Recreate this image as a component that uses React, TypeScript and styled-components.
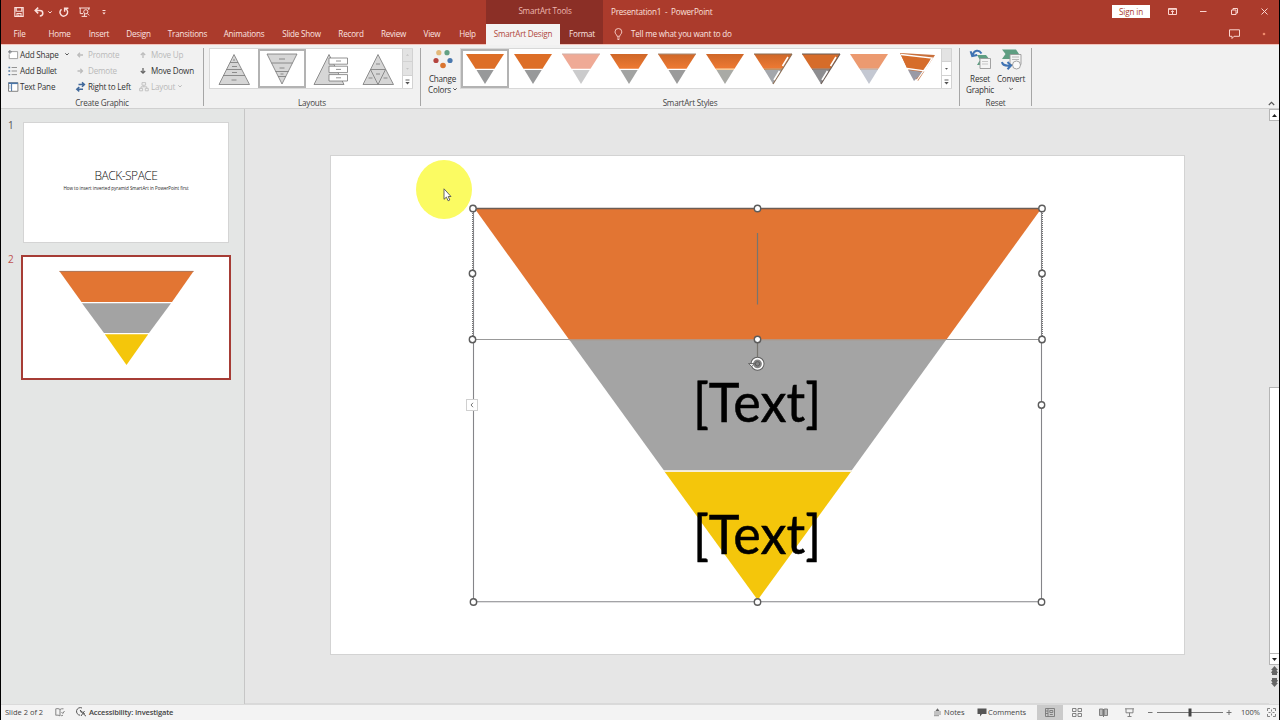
import React from "react";
import styled, { createGlobalStyle, css } from "styled-components";

const Global = createGlobalStyle`
  * { box-sizing: border-box; }
  body { margin: 0; background: #000; }
  svg { display: block; flex: none; overflow: visible; }
`;

const ui = `"Open Sans", "Noto Sans", sans-serif`;

const Window = styled.div`
  width: 1280px; height: 720px; padding: 0 1px; background: #000;
  display: flex; flex-direction: column; overflow: hidden;
  font-family: ${ui}; font-size: 8.1px; letter-spacing: -0.21px; color: #333; line-height: 12px;
  white-space: nowrap;
`;

/* ---------- title bar ---------- */
const Header = styled.header`
  height: 45px; flex: none; background: #ab3b2c; color: #fbe4e0; display: flex; flex-direction: column;
  border-bottom: 1px solid #f3c3bb;
`;
const TitleBar = styled.div`height: 24px; display: flex; align-items: stretch;`;
const QuickAccess = styled.div`
  width: 485px; display: flex; align-items: center; padding-left: 13px;
`;
const Slot = styled.span<{ $w: number }>`
  width: ${(p) => p.$w}px; flex: none; display: flex; align-items: center; justify-content: flex-start;
`;
const ContextTitle = styled.div`
  width: 117px; background: #8b2f26; color: #eeb9b1; display: flex; justify-content: center; align-items: center;
  padding: 0 0 2px 1px;
`;
const DocTitle = styled.div`
  flex: 1; padding: 0 0 0 8px; display: flex; align-items: center; white-space: pre; color: #fbe0dc;
`;
const SignIn = styled.button`
  width: 38px; height: 13px; margin: 5px 18px 0 0; padding: 0; border: 0; background: #fff; color: #ab3b2c;
  font: 8.1px/13px ${ui}; letter-spacing: -0.12px;
`;
const WinButtons = styled.div`display: flex; align-items: center; width: 111px; padding-bottom: 2px;`;

const TabRow = styled.nav`height: 20px; display: flex; align-items: stretch;`;
const Tab = styled.div<{ $w: number; $kind?: "active" | "context" }>`
  width: ${(p) => p.$w}px; flex: none; display: flex; align-items: center; justify-content: center;
  ${(p) => p.$kind === "active" && css`background: #f4f3f3; color: #b0483c; height: 21px; padding-bottom: 1px;`}
  ${(p) => p.$kind === "context" && css`background: #8b2f26; padding-left: 1px;`}
`;
const TellMe = styled.div`flex: 1; display: flex; align-items: center; padding-left: 11px; gap: 8px;`;

/* ---------- ribbon ---------- */
const Ribbon = styled.section`
  height: 64px; flex: none; background: #f1f1f1; display: flex; border-bottom: 1px solid #d0d0d0; padding-top: 3px;
`;
const Group = styled.div<{ $w: number }>`
  width: ${(p) => p.$w}px; height: 58px; flex: none; display: flex; flex-direction: column; border-right: 1px solid #a6a6a6;
`;
const GroupBody = styled.div<{ $pad?: number }>`
  height: 49px; flex: none; display: flex; align-items: flex-start; padding-left: ${(p) => p.$pad ?? 0}px;
`;
const GroupLabel = styled.div`
  text-align: center; line-height: 11px; color: #444;
`;
const CmdColumn = styled.div<{ $w: number }>`width: ${(p) => p.$w}px; display: flex; flex-direction: column;`;
const Cmd = styled.div<{ $off?: boolean }>`
  height: 16px; display: flex; align-items: center; padding-bottom: 3px; color: ${(p) => (p.$off ? "#b9b9b9" : "#333")};
  > svg:first-child { margin-right: 1px; }
`;
const Chevron = styled.span<{ $gap?: number }>`margin-left: ${(p) => p.$gap ?? 4}px; display: flex;`;
const Gallery = styled.div`
  height: 41px; display: flex; background: #fff; border: 1px solid #d8d8d8; border-right: 0;
`;
const GalleryItem = styled.div<{ $on?: boolean }>`
  width: 48px; height: 39px; flex: none; display: flex; align-items: center; justify-content: center;
  box-shadow: ${(p) => (p.$on ? "inset 0 0 0 2px #b3b3b3" : "none")};
`;
const Scroller = styled.div`
  width: 11px; display: flex; flex-direction: column; border-left: 1px solid #d2d2d2; border-right: 1px solid #d2d2d2;
`;
const ScrollStep = styled.div<{ $off?: boolean }>`
  flex: 1; display: flex; align-items: center; justify-content: center; border-bottom: 1px solid #d2d2d2;
  background: ${(p) => (p.$off ? "#e3e3e3" : "#fff")};
  &:last-child { border-bottom: 0; }
`;
const BigCmd = styled.div<{ $w: number }>`
  width: ${(p) => p.$w}px; display: flex; flex-direction: column; align-items: center; line-height: 11px; padding-left: 1px;
`;
const BigIcon = styled.div`height: 25px; display: flex; align-items: flex-start; padding-top: 1px;`;
const Inline = styled.span`display: flex; align-items: center;`;
const RibbonEnd = styled.div`flex: 1; display: flex; align-items: flex-end; justify-content: flex-end; padding: 0 4px 2px 0;`;

/* ---------- work area ---------- */
const Work = styled.main`flex: 1; display: flex; min-height: 0; background: #e6e6e6;`;
const Thumbs = styled.aside`
  width: 244px; flex: none; background: #e4e6e5; border-right: 1px solid #c6c6c6;
  padding: 13px 0 0 7px; display: flex; flex-direction: column; gap: 12px;
`;
const ThumbRow = styled.div`display: flex; align-items: flex-start;`;
const ThumbNo = styled.span<{ $on?: boolean }>`
  width: 13px; font-size: 10px; line-height: ${(p) => (p.$on ? 9 : 7)}px; color: ${(p) => (p.$on ? "#c0504d" : "#555")};
`;
const Thumb = styled.div<{ $on?: boolean }>`
  background: #fff; display: flex; flex-direction: column; align-items: center;
  ${(p) => p.$on
    ? css`width: 210px; height: 125px; border: 2px solid #a63c35; padding: 14px 0 0 0;`
    : css`width: 206px; height: 121px; border: 1px solid #d4d4d4; margin-left: 2px; padding-top: 45px;`}
`;
const ThumbTitle = styled.div`font-size: 12px; font-weight: 300; line-height: 16px; color: #111; letter-spacing: -0.5px;`;
const ThumbSub = styled.div`font-size: 4.5px; line-height: 9px; color: #222; letter-spacing: 0;`;

const Stage = styled.div`flex: 1; padding: 46px 0 0 85px; border-bottom: 1px solid #d9d9d9;`;
const Slide = styled.div`
  position: relative; width: 855px; height: 500px; background: #fff; border: 1px solid #d3d3d3;
`;
const Art = styled.svg`position: absolute; left: -331px; top: -156px;`;
const Placeholder = styled.div<{ $y: number }>`
  position: absolute; left: 326px; width: 200px; top: ${(p) => p.$y}px; text-align: center;
  font-family: Lato, "Open Sans", sans-serif; font-size: 53.5px; line-height: 72px; color: #000; letter-spacing: 0;
  transform: scaleX(0.975); -webkit-text-stroke: 0.5px #000;
`;
const PaneToggle = styled.div`
  position: absolute; left: 135px; top: 243px; width: 12px; height: 12px; background: #fff; border: 1px solid #d0d0d0;
  display: flex; align-items: center; justify-content: center;
`;
const Halo = styled.div`
  position: absolute; left: 85px; top: 4px; width: 56px; height: 59px; border-radius: 50%; background: #fbfb62;
  filter: blur(0.6px);
`;
const Pointer = styled.svg`position: absolute; left: 112px; top: 32px;`;

const VScroll = styled.div`width: 10px; flex: none; display: flex; flex-direction: column; align-items: stretch;`;
const VButton = styled.div`
  height: 12px; flex: none; background: #fff; border: 1px solid #b5b5b5; border-right: 0; display: flex; align-items: center; justify-content: center;
`;
const VTrack = styled.div`height: 266px; flex: none;`;
const VThumb = styled.div`height: 266px; flex: none; background: #fff; border: 1px solid #b5b5b5; border-right: 0; border-bottom: 0;`;
const VNav = styled.div`display: flex; flex-direction: column; align-items: center; gap: 3px; padding-top: 1px;`;

/* ---------- status bar ---------- */
const Status = styled.footer`
  height: 16px; flex: none; background: #f3f3f3; display: flex; align-items: center; color: #444; border-top: 1px solid #dadada;
  padding-bottom: 1px;
`;
const StatusText = styled.span<{ $w?: number; $bold?: boolean }>`
  ${(p) => p.$w && `width: ${p.$w}px;`}
  font-size: 7.5px; letter-spacing: ${(p) => (p.$bold ? -0.14 : 0)}px; font-weight: ${(p) => (p.$bold ? 600 : 400)};
`;
const Spacer = styled.span`flex: 1;`;
const ViewButton = styled.span<{ $on?: boolean; $w: number }>`
  width: ${(p) => p.$w}px; height: 15px; display: flex; align-items: center; justify-content: center;
  background: ${(p) => (p.$on ? "#cacaca" : "transparent")};
`;

/* ---------- icons ---------- */
const Caret = ({ c = "#555", s = 4 }: { c?: string; s?: number }) => (
  <svg width={s} height={s / 2 + 0.5} viewBox="0 0 4 2.5"><path d="M.3.3 2 2 3.7.3" fill="none" stroke={c} strokeWidth="1" /></svg>
);
const Tri = ({ up, c = "#333", w = 4 }: { up?: boolean; c?: string; w?: number }) => (
  <svg width={w} height={w * 0.6} viewBox="0 0 5 3"><path d={up ? "M0 3h5L2.5 0z" : "M0 0h5L2.5 3z"} fill={c} /></svg>
);
const MoreTri = () => (
  <svg width="5" height="6"><path d="M.5 1h4" stroke="#555" strokeWidth=".9" /><path d="M.3 3h4.4L2.5 5.6z" fill="#555" /></svg>
);
const SaveIcon = () => (
  <svg width="10" height="10" fill="none" stroke="#fbe0dc"><path d="M.8.6h8.4v8.8H.8zM2.2 .6v3.6h5.6V.6M3 9.3V6.5h4v2.8M4.8 7.5v1.8" strokeWidth="1.1" /></svg>
);
const UndoIcon = () => (
  <svg width="10" height="10" fill="none" stroke="#fbe0dc" strokeWidth="1.5"><path d="M4.2.6 1.2 3.5l3 2.9M1.4 3.5h4.4c4 0 4 5.3 0 5.6" /></svg>
);
const RedoIcon = () => (
  <svg width="10" height="10" fill="none" stroke="#fbe0dc" strokeWidth="1.4"><path d="M2.5 2.3C-1.3 6 3.2 11 7 8.3 9.7 6 8.9 3 6.3 1.7M5.6 4.8V1.2h3.8" /></svg>
);
const ShowIcon = () => (
  <svg width="11" height="10" fill="none" stroke="#fbe0dc" strokeWidth="1"><path d="M0 1h11M1.2 1v5.6H4M9.8 1v2M5.4 6.6v2.5M2.6 9.4h5.5" /><circle cx="6.8" cy="4.8" r="2.1" /><path d="M8.2 6.4l2 2" /></svg>
);
const ArrowIcon = ({ d, c }: { d: string; c: string }) => (
  <svg width="11" height="8" fill="none" stroke={c} strokeWidth="1.3"><path d={d} /></svg>
);
const LEFT = "M7 4H2M4 1.8 1.8 4 4 6.2";
const RIGHT = "M1.5 4H6.5M4.3 1.8 6.5 4 4.3 6.2";
const UP = "M4 7V2M1.8 4 4 1.8 6.2 4";
const DOWN = "M4 1v5M1.8 4 4 6.2 6.2 4";

const AddShapeIcon = () => (
  <svg width="11" height="10"><path d="M3 1.6h6.6v7H1.2V4.3" fill="#fff" stroke="#999" strokeWidth=".9" /><path d="M1.9 0v3.8M0 1.9h3.8" stroke="#70757a" strokeWidth="1" /></svg>
);
const BulletIcon = () => (
  <svg width="11" height="10"><path d="M3.6 1.5H9M3.6 5H9M3.6 8.6H9" stroke="#888" strokeWidth=".9" /><path d="M.4 1.5h1.8M.4 5h1.8M.4 8.6h1.8" stroke="#51779e" strokeWidth="1.4" /></svg>
);
const PaneIcon = () => (
  <svg width="11" height="10"><path d="M.5.7h9.4v8.6H.5z" fill="#fff" stroke="#777" strokeWidth=".9" /><path d="M.5 1.3h9.4" stroke="#4a76a8" strokeWidth="1.6" /><path d="M3.6 1v8" stroke="#4a76a8" strokeWidth="1" /><path d="M1.3 4h1.2M1.3 6h1.2" stroke="#4a76a8" strokeWidth=".8" /></svg>
);
const SwapIcon = () => (
  <svg width="11" height="10" fill="none" stroke="#41699b" strokeWidth="1.5"><path d="M2.5 2.6h6M6 .4l2.4 2.2L6 4.8M7 7.2H1M3.3 5 .8 7.2l2.5 2.2" /></svg>
);
const TreeIcon = () => (
  <svg width="11" height="10" fill="none" stroke="#c0c0c0" strokeWidth=".9"><path d="M3 .6h3.6v2.6H3zM.6 6.4h3v2.4h-3zM6.3 6.4h3v2.4h-3zM4.8 3.2v1.6M2 6.4V4.8h5.8v1.6" /></svg>
);

const LayoutArt = ({ kind }: { kind: number }) => (
  <svg width="36" height="32" fill="#d6d6d6" stroke="#777" strokeWidth=".8">
    {kind === 0 && (<><path d="M18 1.5 33.5 31.5H3z" /><path d="M14 9.5h8M10.5 16.5h15M7 22.5h22M17 7h2M16 13.5h5M16 19.5h5M15.5 27h5" /></>)}
    {kind === 1 && (<><path d="M3 1h30L18 31z" /><path d="M7.5 10h21M11.5 18.5h13M14 23.5h8M15 6h6M15.5 15h5M16.5 21h3" /></>)}
    {kind === 2 && (<><path d="M17 1.5 32 31.5H2z" /><path d="M17 5h18.500v6.200H17zM17 13.200h18.500v6.400H17zM17 21.600h18.500v6.400H17z" fill="#fff" /><path d="M24 8h5M24 16.400h5M24 24.800h5" /></>)}
    {kind === 3 && (<><path d="M18 1.500 33.500 31.500H3z" /><path d="M10.500 16.500h15L18 31.500zM16 11h4M8.500 25h4M16 21h4M23.500 25h4" /></>)}
  </svg>
);

type StyleSpec = { top: string; bottom: string; line?: string; shine?: boolean; tilt?: boolean; edge?: string };
const artStyles: StyleSpec[] = [
  { top: "#dd6e27", bottom: "#98999a" },
  { top: "#dd6e27", bottom: "#98999a" },
  { top: "#efaa96", bottom: "#cbcbcc", edge: "#d0b0a8" },
  { top: "url(#warm)", bottom: "#a2a3a2" },
  { top: "url(#warm)", bottom: "#9b9b9b", edge: "#a58b78" },
  { top: "url(#warm)", bottom: "#a9aaa5", line: "#f4c187" },
  { top: "url(#warm)", bottom: "#a4a7ac", edge: "#8b6e55", line: "#b08050", shine: true },
  { top: "#d66c2a", bottom: "#8d8d90", edge: "#6b5c55", line: "#7c6a60", shine: true },
  { top: "#ec9a70", bottom: "#c4c8d2", line: "#b9a7a0" },
  { top: "#d66c2a", bottom: "#9a9aa6", tilt: true },
];
const StyleArt = ({ s }: { s: StyleSpec }) => (
  <svg width="38" height="32">
    {s.tilt ? (
      <>
        <path d="M2 0 37 2 20 28 9 15z" fill="#c9703c" />
        <path d="M3 2 33 5 26 17 9 15z" fill={s.top} />
        <path d="M10 17 25 19 16 28z" fill={s.bottom} />
        <path d="M3 1.500 34 5 26.500 17.800 9 15.500M34.500 5 18 28.500" fill="none" stroke="#fff" strokeWidth="1.300" />
      </>
    ) : (
      <>
        <path d="M0 1h38L28.500 15.800H9.500z" fill={s.top} />
        <path d="M10.500 17H27.700L19 31z" fill={s.bottom} />
        {s.line && <path d="M10 16.200h18" stroke={s.line} strokeWidth="1.300" />}
        {s.edge && <path d="M0 1h38" stroke={s.edge} strokeWidth="1.200" />}
        {s.shine && <path d="M38 1 19 31" stroke={s.edge} strokeWidth="1.200" />}
        {s.shine && <path d="M34 4 28.500 13M25.500 18 20 27" stroke="#fff" strokeWidth="1.600" />}
      </>
    )}
  </svg>
);

const DotsIcon = () => (
  <svg width="20" height="20">
    <circle cx="5.8" cy="3.7" r="2.6" fill="#e3b878" /><circle cx="14" cy="3.7" r="2.6" fill="#62a084" />
    <circle cx="3" cy="11.5" r="2.6" fill="#b5453f" /><circle cx="17" cy="11.5" r="2.6" fill="#4a78ae" />
    <circle cx="10" cy="16.5" r="2.8" fill="#d9742f" />
  </svg>
);
const ResetIcon = () => (
  <svg width="21" height="21">
    <path d="M7 6h9l4 5-4 5H7l3-5z" fill="#5f9e82" />
    <path d="M10 9.5h10.5v10H10z" fill="#f4f4f4" stroke="#999" strokeWidth=".9" /><path d="M12 12.5h6M12 15h6" stroke="#bbb" strokeWidth=".8" />
    <path d="M11.5 4.5C9 .6 4.2.8 2.6 6M.6 2.2 2.2 7l5-1" fill="none" stroke="#3f73b3" strokeWidth="2" />
  </svg>
);
const ConvertIcon = () => (
  <svg width="21" height="21">
    <path d="M1 .5h14l3 4.5-3 5H1l3.5-5z" fill="#5f9e82" />
    <path d="M9 5.5h11v10H9z" fill="#f4f4f4" stroke="#999" strokeWidth=".9" /><path d="M11 8h7M11 10.5h7" stroke="#aaa" strokeWidth=".8" />
    <circle cx="15.5" cy="16" r="4" fill="#fafafa" stroke="#999" strokeWidth=".9" />
    <path d="M1 13c.5 3.500 4 4 8.500 3.500M6.500 13l3.500 3.500-3.500 3.700" fill="none" stroke="#3f73b3" strokeWidth="2" />
  </svg>
);

const tabs: [string, number][] = [
  ["File", 37], ["Home", 43], ["Insert", 36], ["Design", 43], ["Transitions", 55], ["Animations", 58],
  ["Slide Show", 57], ["Record", 42], ["Review", 43], ["View", 34], ["Help", 37],
];

const handles: [number, number][] = [
  [473, 208.5], [757.5, 208.5], [1042, 208.5], [472.5, 273.5], [1042, 273.5],
  [472.5, 339.5], [757.5, 339.5], [1042, 339.5], [1041.5, 405], [473.5, 602], [757.5, 602], [1041.5, 602],
];

export default function App() {
  return (
    <Window>
      <Global />
      <Header>
        <TitleBar>
          <QuickAccess>
            <Slot $w={20}><SaveIcon /></Slot>
            <Slot $w={14}><UndoIcon /></Slot>
            <Slot $w={11}><Caret c="#fbe0dc" /></Slot>
            <Slot $w={20}><RedoIcon /></Slot>
            <Slot $w={23}><ShowIcon /></Slot>
            <svg width="4" height="6"><path d="M.5 1.5h3" stroke="#fbe0dc" /><path d="M.3 3.5h3.4L2 5.5z" fill="#fbe0dc" /></svg>
          </QuickAccess>
          <ContextTitle>SmartArt Tools</ContextTitle>
          <DocTitle>{"Presentation1  -  PowerPoint"}</DocTitle>
          <SignIn>Sign in</SignIn>
          <WinButtons>
            <Slot $w={32}><svg width="9" height="7" fill="none" stroke="#fbd5cf"><path d="M.5.5h8v6h-8zM.5 1.3h8M4.5 6V2.8M3 4l1.5-1.3L6 4" /></svg></Slot>
            <Slot $w={31}><svg width="7" height="7"><path d="M0 3.5h6.5" stroke="#fbd5cf" /></svg></Slot>
            <Slot $w={30}><svg width="7" height="7" fill="none" stroke="#fbd5cf"><path d="M.5 2h4.5v4.5H.5zM2 2V.5h4.5V5H5" /></svg></Slot>
            <Slot $w={10}><svg width="7" height="7"><path d="M.5.5l6 6M6.5.5l-6 6" stroke="#fbd5cf" /></svg></Slot>
          </WinButtons>
        </TitleBar>
        <TabRow>
          {tabs.map(([t, w]) => <Tab key={t} $w={w}>{t}</Tab>)}
          <Tab $w={74} $kind="active">SmartArt Design</Tab>
          <Tab $w={43} $kind="context">Format</Tab>
          <TellMe>
            <svg width="9" height="12" fill="none" stroke="#fbd5cf" strokeWidth=".9"><path d="M3 8.3C3 6.5 1 6 1 3.9a3.4 3.4 0 0 1 6.8 0C7.8 6 5.8 6.5 5.8 8.3zM3 10h2.8M3.5 11.5h1.8" /></svg>
            Tell me what you want to do
          </TellMe>
          <Slot $w={31}><svg width="11" height="10" fill="none" stroke="#fbd5cf"><path d="M.5.8h10v6.5H5L3 9.5V7.3H.5z" /></svg></Slot>
          <Slot $w={19}><svg width="8" height="4"><circle cx="4" cy="2" r="1.3" fill="#ef8a6b" /></svg></Slot>
        </TabRow>
      </Header>

      <Ribbon>
        <Group $w={203}>
          <GroupBody $pad={7}>
            <CmdColumn $w={68}>
              <Cmd><AddShapeIcon />Add Shape<Chevron $gap={6}><Caret /></Chevron></Cmd>
              <Cmd><BulletIcon />Add Bullet</Cmd>
              <Cmd><PaneIcon />Text Pane</Cmd>
            </CmdColumn>
            <CmdColumn $w={63}>
              <Cmd $off><ArrowIcon d={LEFT} c="#bcbcbc" />Promote</Cmd>
              <Cmd $off><ArrowIcon d={RIGHT} c="#bcbcbc" />Demote</Cmd>
              <Cmd><SwapIcon />Right to Left</Cmd>
            </CmdColumn>
            <CmdColumn $w={60}>
              <Cmd $off><ArrowIcon d={UP} c="#bcbcbc" />Move Up</Cmd>
              <Cmd><ArrowIcon d={DOWN} c="#666" />Move Down</Cmd>
              <Cmd $off><TreeIcon />Layout<Chevron $gap={3}><Caret c="#bbb" /></Chevron></Cmd>
            </CmdColumn>
          </GroupBody>
          <GroupLabel>Create Graphic</GroupLabel>
        </Group>

        <Group $w={217}>
          <GroupBody $pad={5}>
            <Gallery>
              {[0, 1, 2, 3].map((k) => <GalleryItem key={k} $on={k === 1}><LayoutArt kind={k} /></GalleryItem>)}
              <Scroller>
                <ScrollStep $off><Tri up c="#c4c4c4" w={3} /></ScrollStep>
                <ScrollStep $off><Tri c="#c4c4c4" w={3} /></ScrollStep>
                <ScrollStep><MoreTri /></ScrollStep>
              </Scroller>
            </Gallery>
          </GroupBody>
          <GroupLabel>Layouts</GroupLabel>
        </Group>

        <Group $w={539}>
          <GroupBody $pad={3}>
            <BigCmd $w={36}>
              <BigIcon><DotsIcon /></BigIcon>
              <span>Change</span>
              <Inline>Colors<Chevron $gap={2}><Caret /></Chevron></Inline>
            </BigCmd>
            <Gallery>
              <svg width="0" height="0">
                <defs>
                  <linearGradient id="warm" x1="0" y1="0" x2="0" y2="1">
                    <stop offset="0" stopColor="#cf6728" /><stop offset="1" stopColor="#ee7a33" />
                  </linearGradient>
                </defs>
              </svg>
              {artStyles.map((s, i) => <GalleryItem key={i} $on={i === 0}><StyleArt s={s} /></GalleryItem>)}
              <Scroller>
                <ScrollStep $off />
                <ScrollStep><Tri c="#555" w={3} /></ScrollStep>
                <ScrollStep><MoreTri /></ScrollStep>
              </Scroller>
            </Gallery>
          </GroupBody>
          <GroupLabel>SmartArt Styles</GroupLabel>
        </Group>

        <Group $w={72}>
          <GroupBody $pad={4}>
            <BigCmd $w={31}>
              <BigIcon><ResetIcon /></BigIcon>
              <span>Reset</span>
              <span>Graphic</span>
            </BigCmd>
            <BigCmd $w={31}>
              <BigIcon><ConvertIcon /></BigIcon>
              <span>Convert</span>
              <Chevron $gap={0}><svg width="4" height="8"><path d="M.3 4 2 5.7 3.7 4" fill="none" stroke="#555" /></svg></Chevron>
            </BigCmd>
          </GroupBody>
          <GroupLabel>Reset</GroupLabel>
        </Group>
        <RibbonEnd><svg width="7" height="5"><path d="M.8 4 3.5 1.3 6.2 4" fill="none" stroke="#555" strokeWidth="1.1" /></svg></RibbonEnd>
      </Ribbon>

      <Work>
        <Thumbs>
          <ThumbRow>
            <ThumbNo>1</ThumbNo>
            <Thumb>
              <ThumbTitle>BACK-SPACE</ThumbTitle>
              <ThumbSub>How to insert inverted pyramid SmartArt in PowerPoint first</ThumbSub>
            </Thumb>
          </ThumbRow>
          <ThumbRow>
            <ThumbNo $on>2</ThumbNo>
            <Thumb $on>
              <svg width="135" height="95">
                <path d="M.3 0h134.400L113 31H22.500z" fill="#e27533" />
                <path d="M.5 .4h134" stroke="#a87860" strokeWidth=".9" />
                <path d="M23 32.300h89L90 62h-45z" fill="#a3a3a3" />
                <path d="M45.800 63.200h43.400L67.500 94z" fill="#f4c60b" />
              </svg>
            </Thumb>
          </ThumbRow>
        </Thumbs>

        <Stage>
          <Slide>
            <Halo />
            <Art width="1280" height="720">
              <path d="M475 209H1041L946.5 339.5H569z" fill="#e27533" />
              <path d="M569.5 340H946L851.8 470.3H663.8z" fill="#a4a4a4" />
              <path d="M664.8 472H850.8L757.7 600z" fill="#f4c60b" />
              <path d="M664 471.2H852" stroke="#f3ead0" strokeWidth="1.2" />
              <path d="M473.5 208.5V601.8H1041.5V208.5" fill="none" stroke="#858589" strokeWidth="1.1" />
              <path d="M473 208.5H1042" stroke="#6d5d55" strokeWidth="1.7" />
              <path d="M472.5 209V339.5M1042.5 209V339.5" stroke="#777" strokeDasharray="1 1" />
              <path d="M473 339.5H569M946 339.5H1042" stroke="#999" />
              <path d="M569 339.7H946" stroke="#a98a78" />
              <path d="M757.5 233V304.5M757.5 340V358" stroke="#77756f" strokeWidth="1.2" />
              {handles.map(([x, y]) => <circle key={`${x}-${y}`} cx={x} cy={y} r="3.2" fill="#fff" stroke="#5c5c5c" strokeWidth="1.4" />)}
              <circle cx="757.5" cy="363.8" r="7" fill="#5f5f5f" />
              <circle cx="757.5" cy="363.8" r="5.200" fill="#858585" stroke="#fff" strokeWidth="1.600" />
              <path d="M748.5 363.5h6l-2.8 3.2z" fill="#e8e8e8" stroke="#555" strokeWidth=".8" />
              <circle cx="757.500" cy="363.800" r="2.200" fill="none" stroke="#5a5a5a" />
            </Art>
            <Placeholder $y={209}>[Text]</Placeholder>
            <Placeholder $y={341}>[Text]</Placeholder>
            <PaneToggle><svg width="4" height="6"><path d="M3 .8 1 3l2 2.2" fill="none" stroke="#666" strokeWidth=".9" /></svg></PaneToggle>
            <Pointer width="9" height="14"><path d="M1 .8v10.5l2.4-2.2 1.7 3.7 1.7-.8-1.6-3.5h2.8z" fill="#fff" stroke="#555" strokeWidth=".9" /></Pointer>
          </Slide>
        </Stage>

        <VScroll>
          <VButton><Tri up c="#222" w={5} /></VButton>
          <VTrack />
          <VThumb />
          <VButton><Tri c="#222" w={5} /></VButton>
          <VNav>
            <svg width="7" height="9"><path d="M3.5 0 7 4H5.5L7 7H6v2H1V7H0l1.5-3H0z" fill="#666" /></svg>
            <svg width="7" height="9"><path d="M3.5 9 7 5H5.5L7 2H6V0H1v2H0l1.5 3H0z" fill="#666" /></svg>
          </VNav>
        </VScroll>
      </Work>

      <Status>
        <Slot $w={4} />
        <StatusText $w={50}>Slide 2 of 2</StatusText>
        <Slot $w={21}><svg width="10" height="9" fill="none" stroke="#777" strokeWidth=".9"><path d="M5 1.5C4 .5 2 .5.8.8v6.5C2 7 4 7 5 8V1.5C5.8.8 7 .6 8.5.8M6 8c.5-.5 1-.6 2-.7M6.5 4l1.3 1.5L9.5 3" /></svg></Slot>
        <Slot $w={13}><svg width="11" height="10" fill="none" stroke="#555"><path d="M6 1A3.8 3.8 0 1 0 4 8.2M4 3.2l5 4M4.2 3l1.3 2.8M8.5 4 5 9M7 6.5 10 9.2" /></svg></Slot>
        <StatusText $bold>Accessibility: Investigate</StatusText>
        <Spacer />
        <Slot $w={11}><svg width="9" height="8"><path d="M1 4h7M1 6h7M1 7.7h5" stroke="#777" strokeWidth=".8" /><path d="M2.5 3h4l-2-2.7z" fill="#666" /></svg></Slot>
        <StatusText $w={33}>Notes</StatusText>
        <Slot $w={11}><svg width="10" height="9"><path d="M.5.5h9V6H5L3 8.5V6H.5z" fill="#555" /></svg></Slot>
        <StatusText $w={49}>Comments</StatusText>
        <ViewButton $on $w={26}><svg width="10" height="9" fill="none" stroke="#777" strokeWidth=".9"><path d="M.5.5h9v8h-9zM3 .5v8M.5 3h2.5M.5 5.5H3M4.8 2.5h3v2h-3zM4.8 6.5h3" /></svg></ViewButton>
        <ViewButton $w={27}><svg width="10" height="9" fill="none" stroke="#777" strokeWidth=".9"><path d="M.5.5H4v3H.5zM6 .5h3.5v3H6zM.5 5.5H4v3H.5zM6 5.5h3.5v3H6z" /></svg></ViewButton>
        <ViewButton $w={26}><svg width="9" height="9"><path d="M.5 1h3.3v6.5H.5zM5.2 1h3.3v6.5H5.2z" fill="#bbb" stroke="#777" strokeWidth=".9" /><path d="M4.5 1v8" stroke="#777" /></svg></ViewButton>
        <ViewButton $w={27}><svg width="9" height="9" fill="none" stroke="#777" strokeWidth=".9"><path d="M0 .8h9M1 .8v4h7v-4M4.5 4.8v3.5M2.5 8.5h4" /></svg></ViewButton>
        <Slot $w={86}>
          <svg width="86" height="9">
            <path d="M5 4.5h4.5M83.5 4.5h5M86 2v5" stroke="#666" strokeWidth=".9" />
            <path d="M14 4.5H80" stroke="#777" /><path d="M45.5.5h3v8h-3z" fill="#444" />
          </svg>
        </Slot>
        <Slot $w={12} />
        <StatusText $w={26}>100%</StatusText>
        <Slot $w={12}><svg width="9" height="9" fill="none" stroke="#777" strokeWidth=".9"><path d="M.5 3V.5H3M6 .5h2.5V3M8.5 6v2.5H6M3 8.5H.5V6M4.5 1.5v2M4.5 5.5v2M1.5 4.5h2M5.5 4.5h2" /></svg></Slot>
      </Status>
    </Window>
  );
}
